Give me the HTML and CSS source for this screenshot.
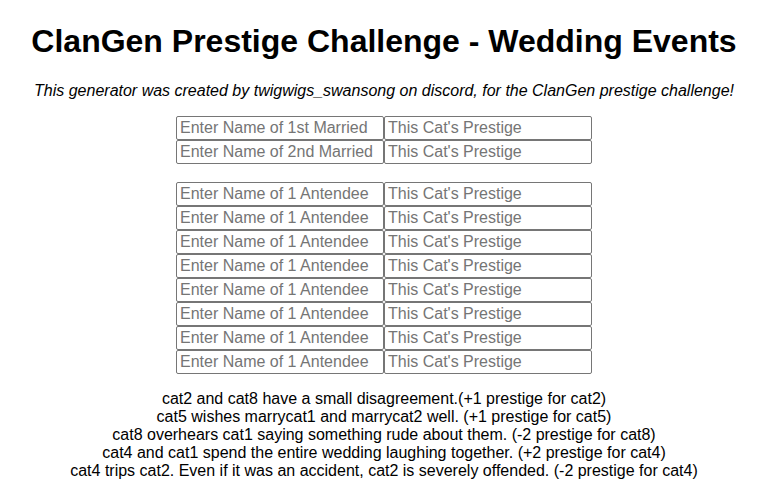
FILE: index.html
```html
<!DOCTYPE html>
<html lang="en">
<head>
    <meta charset="UTF-8">
    <meta name="viewport" content="width=device-width, initial-scale=1.0">
    <title>ClanGen Prestige Challenge - Wedding Events</title>
    <link rel="stylesheet" href="styles.css">
</head>
<body>
    <h1>ClanGen Prestige Challenge - Wedding Events</h1>
    <p class="credit"><em>This generator was created by twigwigs_swansong on discord, for the ClanGen prestige challenge!</em></p>

    <!-- The couple -->
    <div class="cat-list">
        <div class="cat-row">
            <input type="text" placeholder="Enter Name of 1st Married">
            <input type="text" placeholder="This Cat's Prestige">
        </div>
        <div class="cat-row">
            <input type="text" placeholder="Enter Name of 2nd Married">
            <input type="text" placeholder="This Cat's Prestige">
        </div>
    </div>

    <!-- Guests -->
    <div class="cat-list guests">
        <div class="cat-row"><input type="text" placeholder="Enter Name of 1 Antendee"><input type="text" placeholder="This Cat's Prestige"></div>
        <div class="cat-row"><input type="text" placeholder="Enter Name of 1 Antendee"><input type="text" placeholder="This Cat's Prestige"></div>
        <div class="cat-row"><input type="text" placeholder="Enter Name of 1 Antendee"><input type="text" placeholder="This Cat's Prestige"></div>
        <div class="cat-row"><input type="text" placeholder="Enter Name of 1 Antendee"><input type="text" placeholder="This Cat's Prestige"></div>
        <div class="cat-row"><input type="text" placeholder="Enter Name of 1 Antendee"><input type="text" placeholder="This Cat's Prestige"></div>
        <div class="cat-row"><input type="text" placeholder="Enter Name of 1 Antendee"><input type="text" placeholder="This Cat's Prestige"></div>
        <div class="cat-row"><input type="text" placeholder="Enter Name of 1 Antendee"><input type="text" placeholder="This Cat's Prestige"></div>
        <div class="cat-row"><input type="text" placeholder="Enter Name of 1 Antendee"><input type="text" placeholder="This Cat's Prestige"></div>
    </div>

    <div class="events" id="events">
        cat2 and cat8 have a small disagreement.(+1 prestige for cat2)<br>
        cat5 wishes marrycat1 and marrycat2 well. (+1 prestige for cat5)<br>
        cat8 overhears cat1 saying something rude about them. (-2 prestige for cat8)<br>
        cat4 and cat1 spend the entire wedding laughing together. (+2 prestige for cat4)<br>
        cat4 trips cat2. Even if it was an accident, cat2 is severely offended. (-2 prestige for cat4)
    </div>
</body>
</html>
```

FILE: styles.css
```css
body {
    font-family: "Liberation Sans", Arial, sans-serif;
    text-align: center;
    color: #000;
    background-color: #fff;
}
h1 {
    font-size: 32px;
    margin-top: 15px;
}
.credit {
    font-size: 16px;
    margin-top: 22px;
}
.cat-list {
    display: flex;
    flex-direction: column;
    align-items: center;
}
.guests {
    margin-top: 18px;
}
.cat-row {
    display: flex;
}
input {
    box-sizing: border-box;
    width: 208px;
    height: 24px;
    padding: 1px 3px;
    font-family: "Liberation Sans", Arial, sans-serif;
    font-size: 16px;
    border: 1px solid #767676;
    border-radius: 2px;
    background-color: #fff;
}
input::placeholder {
    color: #757575;
}
.events {
    margin-top: 16px;
    font-size: 16px;
    line-height: 18px;
}
```
